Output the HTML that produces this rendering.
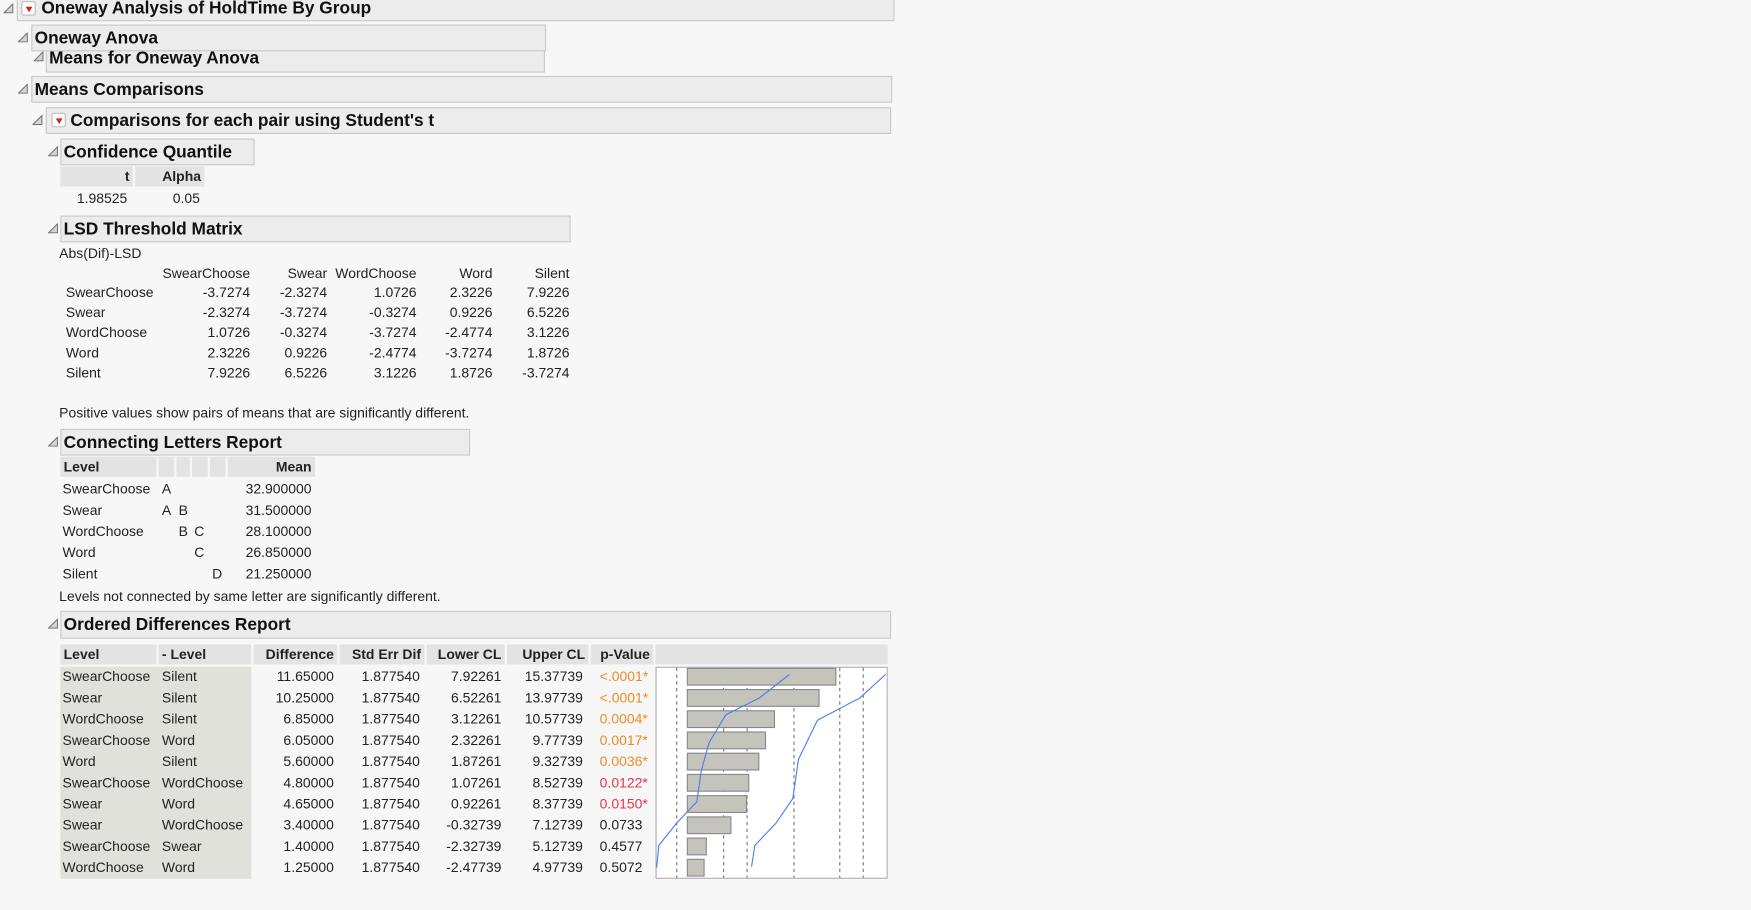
<!DOCTYPE html>
<html><head><meta charset="utf-8"><style>
html,body{margin:0;padding:0;background:#f7f7f7;overflow:hidden;width:1751px;height:910px}
#s{position:absolute;left:0;top:0;width:1568px;height:815px;transform:scale(1.11671);transform-origin:0 0;font-family:"Liberation Sans",sans-serif;font-size:12.5px;color:#222}
.a{position:absolute;white-space:nowrap;margin-top:1px}
.hb{position:absolute;background:#ececec;border:1px solid #c9c9c9;box-sizing:border-box}
.ht{position:absolute;font-weight:bold;font-size:15.5px;color:#111;white-space:nowrap;line-height:18px;margin-top:1px}
.tri{position:absolute;width:9px;height:9px}
.rd{position:absolute;width:13px;height:13px;border:1px solid #bbb;background:#fff;box-sizing:border-box;border-radius:2px}
.rd:after{content:"";position:absolute;left:2.5px;top:3.5px;border-left:3.5px solid transparent;border-right:3.5px solid transparent;border-top:5px solid #d81e1e}
.th{position:absolute;background:#e3e3e3;font-weight:bold;height:18px;line-height:19px;box-sizing:border-box;padding:0 3px}
.r{text-align:right}
.or{color:#f08a24}.rr{color:#e8344a}
</style></head><body><div id="s">
<svg width="0" height="0" style="position:absolute"><defs><symbol id="t" viewBox="0 0 9 9"><polygon points="8.5,0.5 8.5,8.5 0.5,8.5" fill="#d4d4d4" stroke="#777"/></symbol></defs></svg>

<div class="hb" style="left:15px;top:-3px;width:786px;height:22px"></div>
<svg class="tri" style="left:3px;top:3px"><use href="#t"/></svg>
<div class="rd" style="left:19px;top:1px"></div>
<div class="ht" style="left:37px;top:-2px">Oneway Analysis of HoldTime By Group</div>

<div class="hb" style="left:28px;top:22px;width:461px;height:24px"></div>
<svg class="tri" style="left:16px;top:29px"><use href="#t"/></svg>
<div class="ht" style="left:31px;top:25px">Oneway Anova</div>
<div class="hb" style="left:41px;top:45px;width:447px;height:20px"></div>
<svg class="tri" style="left:30px;top:46px"><use href="#t"/></svg>
<div class="ht" style="left:44px;top:43px">Means for Oneway Anova</div>

<div class="hb" style="left:28px;top:68px;width:771px;height:24px"></div>
<svg class="tri" style="left:16px;top:75px"><use href="#t"/></svg>
<div class="ht" style="left:31px;top:71px">Means Comparisons</div>

<div class="hb" style="left:41px;top:96px;width:757px;height:24px"></div>
<svg class="tri" style="left:29px;top:103px"><use href="#t"/></svg>
<div class="rd" style="left:46px;top:101px"></div>
<div class="ht" style="left:63px;top:99px">Comparisons for each pair using Student's t</div>

<div class="hb" style="left:54px;top:124px;width:174px;height:24px"></div>
<svg class="tri" style="left:43px;top:131px"><use href="#t"/></svg>
<div class="ht" style="left:57px;top:127px">Confidence Quantile</div>
<div class="th r" style="left:54px;top:149px;width:65px">t</div>
<div class="th r" style="left:121px;top:149px;width:62px">Alpha</div>
<div class="a r" style="left:54px;top:170px;width:60px">1.98525</div>
<div class="a r" style="left:121px;top:170px;width:58px">0.05</div>

<div class="hb" style="left:54px;top:193px;width:457px;height:24px"></div>
<svg class="tri" style="left:43px;top:200px"><use href="#t"/></svg>
<div class="ht" style="left:57px;top:196px">LSD Threshold Matrix</div>
<div class="a" style="left:53px;top:219px">Abs(Dif)-LSD</div>
<div class="a r" style="left:120px;top:237px;width:104px">SwearChoose</div>
<div class="a r" style="left:230px;top:237px;width:63px">Swear</div>
<div class="a r" style="left:290px;top:237px;width:83px">WordChoose</div>
<div class="a r" style="left:380px;top:237px;width:61px">Word</div>
<div class="a r" style="left:450px;top:237px;width:60px">Silent</div>

<div class="a" style="left:53px;top:362px">Positive values show pairs of means that are significantly different.</div>

<div class="hb" style="left:54px;top:384px;width:367px;height:24px"></div>
<svg class="tri" style="left:43px;top:391px"><use href="#t"/></svg>
<div class="ht" style="left:57px;top:387px">Connecting Letters Report</div>
<div class="th" style="left:54px;top:409px;width:86px">Level</div>
<div class="th" style="left:142px;top:409px;width:14px"></div>
<div class="th" style="left:158px;top:409px;width:12px"></div>
<div class="th" style="left:172px;top:409px;width:14px"></div>
<div class="th" style="left:188px;top:409px;width:14px"></div>
<div class="th r" style="left:204px;top:409px;width:78px">Mean</div>
<div class="a" style="left:53px;top:526px">Levels not connected by same letter are significantly different.</div>

<div class="hb" style="left:54px;top:547px;width:744px;height:25px"></div>
<svg class="tri" style="left:43px;top:554px"><use href="#t"/></svg>
<div class="ht" style="left:57px;top:550px">Ordered Differences Report</div>
<div class="th" style="left:54px;top:577px;width:86px">Level</div>
<div class="th" style="left:142px;top:577px;width:83px">- Level</div>
<div class="th r" style="left:227px;top:577px;width:75px">Difference</div>
<div class="th r" style="left:304px;top:577px;width:76px">Std Err Dif</div>
<div class="th r" style="left:382px;top:577px;width:70px">Lower CL</div>
<div class="th r" style="left:454px;top:577px;width:73px">Upper CL</div>
<div class="th r" style="left:529px;top:577px;width:56px">p-Value</div>
<div class="th" style="left:587px;top:577px;width:208px"></div>
<div style="position:absolute;left:54px;top:597px;width:171px;height:190px;background:#e1e1dc"></div>
<svg style="position:absolute;left:587px;top:597px" width="208" height="190">
<rect x="0.5" y="0.5" width="207" height="189" fill="#fff" stroke="#aaa"/>
<g stroke="#777" stroke-dasharray="3,3" stroke-width="1">
<line x1="19" y1="1" x2="19" y2="189"/><line x1="61" y1="1" x2="61" y2="189"/><line x1="82" y1="1" x2="82" y2="189"/><line x1="124" y1="1" x2="124" y2="189"/><line x1="165" y1="1" x2="165" y2="189"/><line x1="186" y1="1" x2="186" y2="189"/></g>
<g fill="#c4c3bc" stroke="#888">
<rect x="28.5" y="1.5" width="133" height="15"/><rect x="28.5" y="20.5" width="118" height="15"/><rect x="28.5" y="39.5" width="78" height="15"/><rect x="28.5" y="58.5" width="70" height="15"/><rect x="28.5" y="77.5" width="64" height="15"/><rect x="28.5" y="96.5" width="55" height="15"/><rect x="28.5" y="115.5" width="53" height="15"/><rect x="28.5" y="134.5" width="39" height="15"/><rect x="28.5" y="153.5" width="17" height="15"/><rect x="28.5" y="172.5" width="15" height="15"/></g>
<polyline fill="none" stroke="#4a7cf0" points="1,180 3,160 19,140 37,121 41,93 48,68 63,43 93,28 120,7"/>
<polyline fill="none" stroke="#4a7cf0" points="86,179 89,160 108,140 123,118 128,83 145,48 183,28 206,7"/>
</svg>
</div>
<script>
function A(h){document.getElementById('s').insertAdjacentHTML('beforeend',h)}
var L=[["SwearChoose","-3.7274","-2.3274","1.0726","2.3226","7.9226"],["Swear","-2.3274","-3.7274","-0.3274","0.9226","6.5226"],["WordChoose","1.0726","-0.3274","-3.7274","-2.4774","3.1226"],["Word","2.3226","0.9226","-2.4774","-3.7274","1.8726"],["Silent","7.9226","6.5226","3.1226","1.8726","-3.7274"]];
var R=[224,293,373,441,510];
L.forEach(function(r,i){var y=254+i*18;A('<div class="a" style="left:59px;top:'+y+'px">'+r[0]+'</div>');for(var j=1;j<6;j++)A('<div class="a r" style="left:'+(R[j-1]-70)+'px;top:'+y+'px;width:70px">'+r[j]+'</div>')});
var C=[["SwearChoose",[["A",145]],"32.900000"],["Swear",[["A",145],["B",160]],"31.500000"],["WordChoose",[["B",160],["C",174]],"28.100000"],["Word",[["C",174]],"26.850000"],["Silent",[["D",190]],"21.250000"]];
var cy=[430,449,468,487,506];
C.forEach(function(r,i){var y=cy[i];A('<div class="a" style="left:56px;top:'+y+'px">'+r[0]+'</div>');r[1].forEach(function(l){A('<div class="a" style="left:'+l[1]+'px;top:'+y+'px">'+l[0]+'</div>')});A('<div class="a r" style="left:200px;top:'+y+'px;width:79px">'+r[2]+'</div>')});
var O=[["SwearChoose","Silent","11.65000","7.92261","15.37739","&lt;.0001*","or"],["Swear","Silent","10.25000","6.52261","13.97739","&lt;.0001*","or"],["WordChoose","Silent","6.85000","3.12261","10.57739","0.0004*","or"],["SwearChoose","Word","6.05000","2.32261","9.77739","0.0017*","or"],["Word","Silent","5.60000","1.87261","9.32739","0.0036*","or"],["SwearChoose","WordChoose","4.80000","1.07261","8.52739","0.0122*","rr"],["Swear","Word","4.65000","0.92261","8.37739","0.0150*","rr"],["Swear","WordChoose","3.40000","-0.32739","7.12739","0.0733",""],["SwearChoose","Swear","1.40000","-2.32739","5.12739","0.4577",""],["WordChoose","Word","1.25000","-2.47739","4.97739","0.5072",""]];
O.forEach(function(r,i){var y=598+i*19.05;A('<div class="a" style="left:56px;top:'+y+'px">'+r[0]+'</div><div class="a" style="left:145px;top:'+y+'px">'+r[1]+'</div><div class="a r" style="left:220px;top:'+y+'px;width:79px">'+r[2]+'</div><div class="a r" style="left:300px;top:'+y+'px;width:76px">1.877540</div><div class="a r" style="left:370px;top:'+y+'px;width:79px">'+r[3]+'</div><div class="a r" style="left:440px;top:'+y+'px;width:82px">'+r[4]+'</div><div class="a '+r[6]+'" style="left:537px;top:'+y+'px">'+r[5]+'</div>')});
</script>
</body></html>
